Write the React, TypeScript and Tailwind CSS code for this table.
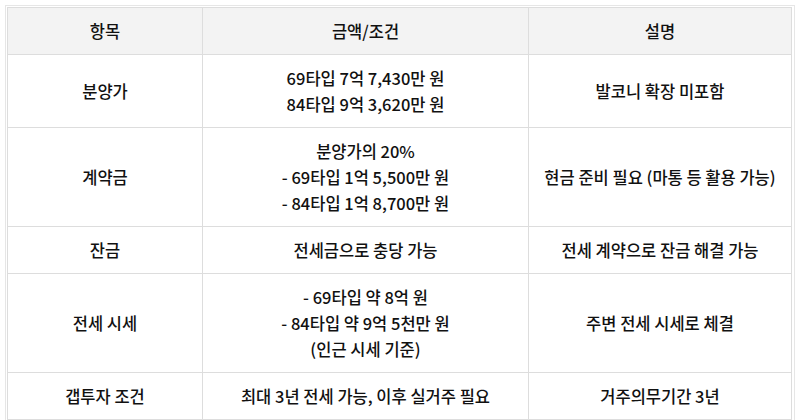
const rows: { item: string; amount: string[]; desc: string }[] = [
  { item: '분양가', amount: ['69타입 7억 7,430만 원', '84타입 9억 3,620만 원'], desc: '발코니 확장 미포함' },
  {
    item: '계약금',
    amount: ['분양가의 20%', '- 69타입 1억 5,500만 원', '- 84타입 1억 8,700만 원'],
    desc: '현금 준비 필요 (마통 등 활용 가능)',
  },
  { item: '잔금', amount: ['전세금으로 충당 가능'], desc: '전세 계약으로 잔금 해결 가능' },
  {
    item: '전세 시세',
    amount: ['- 69타입 약 8억 원', '- 84타입 약 9억 5천만 원', '(인근 시세 기준)'],
    desc: '주변 전세 시세로 체결',
  },
  { item: '갭투자 조건', amount: ['최대 3년 전세 가능, 이후 실거주 필요'], desc: '거주의무기간 3년' },
];

export default function App() {
  return (
    <div className="w-[800px] h-[420px] bg-white p-[5px] font-['Noto_Sans_CJK_KR','Noto_Sans',sans-serif] text-[16.5px] font-medium leading-[26px] text-[#111]">
      <div className="border border-[#e6e6e6] p-px">
        <table className="w-[784px] border-collapse table-fixed text-center">
          <colgroup>
            <col className="w-[195px]" />
            <col className="w-[326px]" />
            <col className="w-[263px]" />
          </colgroup>
          <thead>
            <tr className="bg-[#f3f3f3]">
              <th className="border border-[#dddddd] py-[10px] font-medium">항목</th>
              <th className="border border-[#dddddd] py-[10px] font-medium">금액/조건</th>
              <th className="border border-[#dddddd] py-[10px] font-medium">설명</th>
            </tr>
          </thead>
          <tbody>
            {rows.map((r) => (
              <tr key={r.item}>
                <td className="border border-[#dddddd] py-[10px]">{r.item}</td>
                <td className="border border-[#dddddd] py-[10px]">
                  {r.amount.map((line) => (
                    <div key={line}>{line}</div>
                  ))}
                </td>
                <td className="border border-[#dddddd] py-[9px]">{r.desc}</td>
              </tr>
            ))}
          </tbody>
        </table>
      </div>
    </div>
  );
}
